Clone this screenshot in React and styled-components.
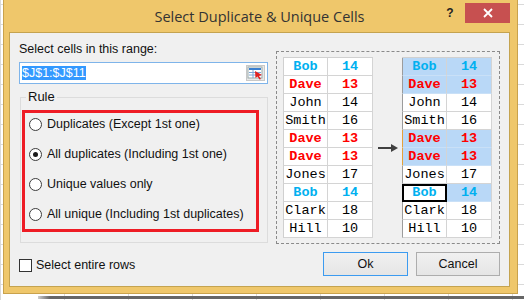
import React from 'react';
import styled, { createGlobalStyle } from 'styled-components';

const GlobalStyle = createGlobalStyle`
  body {
    margin: 0;
    background-color: #fff;
    background-image:
      linear-gradient(to right, #dadada 1px, transparent 1px),
      linear-gradient(to bottom, #dadada 1px, transparent 1px);
    background-size: 64px 20px;
    background-position: 0 4px;
    font-family: "Liberation Sans", Arial, sans-serif;
  }
`;

const Page = styled.div`
  width: 524px;
  height: 300px;
  overflow: hidden;
  padding-left: 3px;
  box-sizing: border-box;
`;

const Window = styled.div`
  width: 515px;
  height: 294px;
  box-sizing: border-box;
  background: #efc76b;
  border: 1px solid #c9a24c;
  border-top: none;
  padding: 0 7px 6px 5px;
  display: flex;
  flex-direction: column;
`;

const Shadow = styled.div`
  margin: 2px 0 0 35px;
  height: 3px;
  background: linear-gradient(to right, rgba(90, 90, 90, 0.3), #666 12px);
`;

const TitleBar = styled.div`
  height: 32px;
  display: flex;
  align-items: flex-start;
`;

const TitleSpacer = styled.div`
  width: 75px;
`;

const Title = styled.div`
  flex: 1;
  text-align: center;
  font-family: "Open Sans", "Noto Sans", sans-serif;
  font-size: 14.5px;
  line-height: 20px;
  padding-top: 7px;
  color: #333;
`;

const HelpButton = styled.div`
  width: 30px;
  height: 20px;
  margin-top: 3px;
  display: flex;
  align-items: center;
  justify-content: center;
  font-family: "Liberation Sans", Arial, sans-serif;
  font-weight: bold;
  font-size: 12px;
  color: #222;
`;

const CloseButton = styled.div`
  width: 45px;
  height: 20px;
  margin-top: 3px;
  background: #c75050;
  display: flex;
  align-items: center;
  justify-content: center;
`;

const Client = styled.div`
  flex: 1;
  background: #f0f0f0;
  border: 1px solid #c4a350;
  padding: 0 9px 10px 9px;
  display: flex;
  flex-direction: column;
  font-size: 12.5px;
  color: #111;
`;

const MainRow = styled.div`
  display: flex;
  gap: 8px;
  height: 211px;
`;

const LeftColumn = styled.div`
  width: 249px;
  display: flex;
  flex-direction: column;
`;

const FieldLabel = styled.div`
  margin-top: 9px;
  line-height: 14px;
  height: 14px;
`;

const RangeInput = styled.div`
  margin-top: 6px;
  height: 22px;
  box-sizing: border-box;
  border: 1px solid #7eb4ea;
  background: #fff;
  display: flex;
  align-items: center;
  padding: 0 2px;
`;

const Selected = styled.span`
  background: #3399ff;
  color: #fff;
  line-height: 14px;
`;

const PickButton = styled.div`
  margin-left: auto;
  width: 19px;
  height: 16px;
  display: flex;
  align-items: center;
  justify-content: center;
  background: #e8e8e8;
  border: 1px solid #c8c8c8;
  box-sizing: border-box;
`;

const RuleGroup = styled.fieldset`
  margin: 6px 0 0 1px;
  width: 248px;
  box-sizing: border-box;
  border: 1px solid #dcdcdc;
  padding: 0 8px 10px 1px;
  min-width: 0;
`;

const Legend = styled.legend`
  margin-left: 4px;
  padding: 0 2px;
  line-height: 14px;
  font-size: 13px;
`;

const RedBox = styled.div`
  margin-top: 6px;
  border: 3px solid #ee1c25;
  padding: 0 0 4px 4px;
  display: flex;
  flex-direction: column;
  gap: 8px;
`;

const Option = styled.label`
  height: 22px;
  display: flex;
  align-items: center;
  gap: 5px;
`;

const Radio = styled.span`
  width: 13px;
  height: 13px;
  box-sizing: border-box;
  border-radius: 50%;
  border: 1px solid #3c3c3c;
  background: #fff;
  display: flex;
  align-items: center;
  justify-content: center;

  &::after {
    content: '';
    width: 5px;
    height: 5px;
    border-radius: 50%;
    background: #1a1a1a;
    display: ${p => (p.$checked ? 'block' : 'none')};
  }
`;

const Preview = styled.div`
  margin-top: 18px;
  width: 224px;
  height: 193px;
  box-sizing: border-box;
  border: 1px dashed #8a8a8a;
  padding: 5px 7px 0 6px;
  display: flex;
  align-items: flex-start;
`;

const Sheet = styled.div`
  width: 90px;
  display: grid;
  grid-template-columns: 45px 45px;
  grid-auto-rows: 18px;
  border-top: 1px solid #d0d0d0;
  background: #fff;
`;

const Cell = styled.div`
  box-sizing: border-box;
  display: flex;
  align-items: center;
  justify-content: center;
  font-family: "Liberation Mono", "DejaVu Sans Mono", monospace;
  font-size: 13.5px;
  font-weight: ${p => (p.$bold ? 'bold' : 'normal')};
  color: ${p => p.$color};
  background: ${p => (p.$hl ? '#b9d8f7' : '#fff')};
  border-bottom: 1px solid ${p => (p.$hl ? '#c9e0f7' : '#d4d4d4')};
  border-right: 1px solid #d4d4d4;
  border-left: ${p => (p.$edge ? `1px solid ${p.$edge}` : 'none')};
  ${p => p.$active && 'outline: 2px solid #000; outline-offset: -2px; background: #fff;'}
`;

const ArrowSlot = styled.div`
  width: 29px;
  height: 181px;
  display: flex;
  align-items: center;
  justify-content: center;
`;

const BottomRow = styled.div`
  margin-top: 8px;
  height: 24px;
  display: flex;
  align-items: center;
  gap: 8px;
`;

const Check = styled.label`
  display: flex;
  align-items: center;
  gap: 4px;
  margin-right: auto;
  padding-top: 2px;
`;

const Box = styled.span`
  width: 13px;
  height: 13px;
  box-sizing: border-box;
  border: 1px solid #333;
  background: #fff;
`;

const Button = styled.div`
  width: ${p => p.$w}px;
  height: 24px;
  box-sizing: border-box;
  border: 1px solid ${p => (p.$primary ? '#3c9bf0' : '#adadad')};
  background: linear-gradient(#f0f0f0, #e5e5e5);
  display: flex;
  align-items: center;
  justify-content: center;
`;

const rows = [
  ['Bob', '14'],
  ['Dave', '13'],
  ['John', '14'],
  ['Smith', '16'],
  ['Dave', '13'],
  ['Dave', '13'],
  ['Jones', '17'],
  ['Bob', '14'],
  ['Clark', '18'],
  ['Hill', '10'],
];

const style = name => {
  if (name === 'Bob') return { color: '#00b0f0', bold: true };
  if (name === 'Dave') return { color: '#ff0000', bold: true };
  return { color: '#000', bold: false };
};

const highlighted = [0, 1, 4, 5, 7];
const orangeEdge = [4, 5, 7];

const Table = ({ result }) => (
  <Sheet>
    {rows.map(([name, num], i) => {
      const s = style(name);
      const hl = result && highlighted.includes(i);
      const edge = result ? (orangeEdge.includes(i) ? '#e4a23a' : '#9c9c9c') : '#d0d0d0';
      return (
        <React.Fragment key={i}>
          <Cell $color={s.color} $bold={s.bold} $hl={hl} $edge={edge} $active={result && i === 7}>{name}</Cell>
          <Cell $color={s.color} $bold={s.bold} $hl={hl}>{num}</Cell>
        </React.Fragment>
      );
    })}
  </Sheet>
);

const options = [
  'Duplicates (Except 1st one)',
  'All duplicates (Including 1st one)',
  'Unique values only',
  'All unique (Including 1st duplicates)',
];

export default function App() {
  return (
    <>
      <GlobalStyle />
      <Page>
        <Window>
          <TitleBar>
            <TitleSpacer />
            <Title>Select Duplicate &amp; Unique Cells</Title>
            <HelpButton>?</HelpButton>
            <CloseButton>
              <svg width="10" height="10" viewBox="0 0 10 10">
                <path d="M1 1 L9 9 M9 1 L1 9" stroke="#fff" strokeWidth="1.8" />
              </svg>
            </CloseButton>
          </TitleBar>
          <Client>
            <MainRow>
              <LeftColumn>
                <FieldLabel>Select cells in this range:</FieldLabel>
                <RangeInput>
                  <Selected>$J$1:$J$11</Selected>
                  <PickButton>
                    <svg width="17" height="14" viewBox="0 0 17 14">
                      <rect x="1" y="1" width="14" height="11" fill="#fff" stroke="#9aa" />
                      <rect x="2" y="2" width="12" height="2" fill="#3a7fd0" />
                      <path d="M2 6.5 H14 M2 9 H14 M6 4 V12" stroke="#7aa6d8" strokeWidth="1" />
                      <path d="M8 5 L15 9 L12 10 L14 13 L12.5 13.5 L10.5 10.5 L8.5 12 Z" fill="#e02020" />
                    </svg>
                  </PickButton>
                </RangeInput>
                <RuleGroup>
                  <Legend>Rule</Legend>
                  <RedBox>
                    {options.map((o, i) => (
                      <Option key={o}>
                        <Radio $checked={i === 1} />
                        {o}
                      </Option>
                    ))}
                  </RedBox>
                </RuleGroup>
              </LeftColumn>
              <Preview>
                <Table />
                <ArrowSlot>
                  <svg width="20" height="8" viewBox="0 0 20 8">
                    <path d="M0 4 H14" stroke="#404040" strokeWidth="2" />
                    <path d="M13 0 L20 4 L13 8 Z" fill="#404040" />
                  </svg>
                </ArrowSlot>
                <Table result />
              </Preview>
            </MainRow>
            <BottomRow>
              <Check>
                <Box />
                Select entire rows
              </Check>
              <Button $w={85} $primary>Ok</Button>
              <Button $w={84}>Cancel</Button>
            </BottomRow>
          </Client>
        </Window>
        <Shadow />
      </Page>
    </>
  );
}
